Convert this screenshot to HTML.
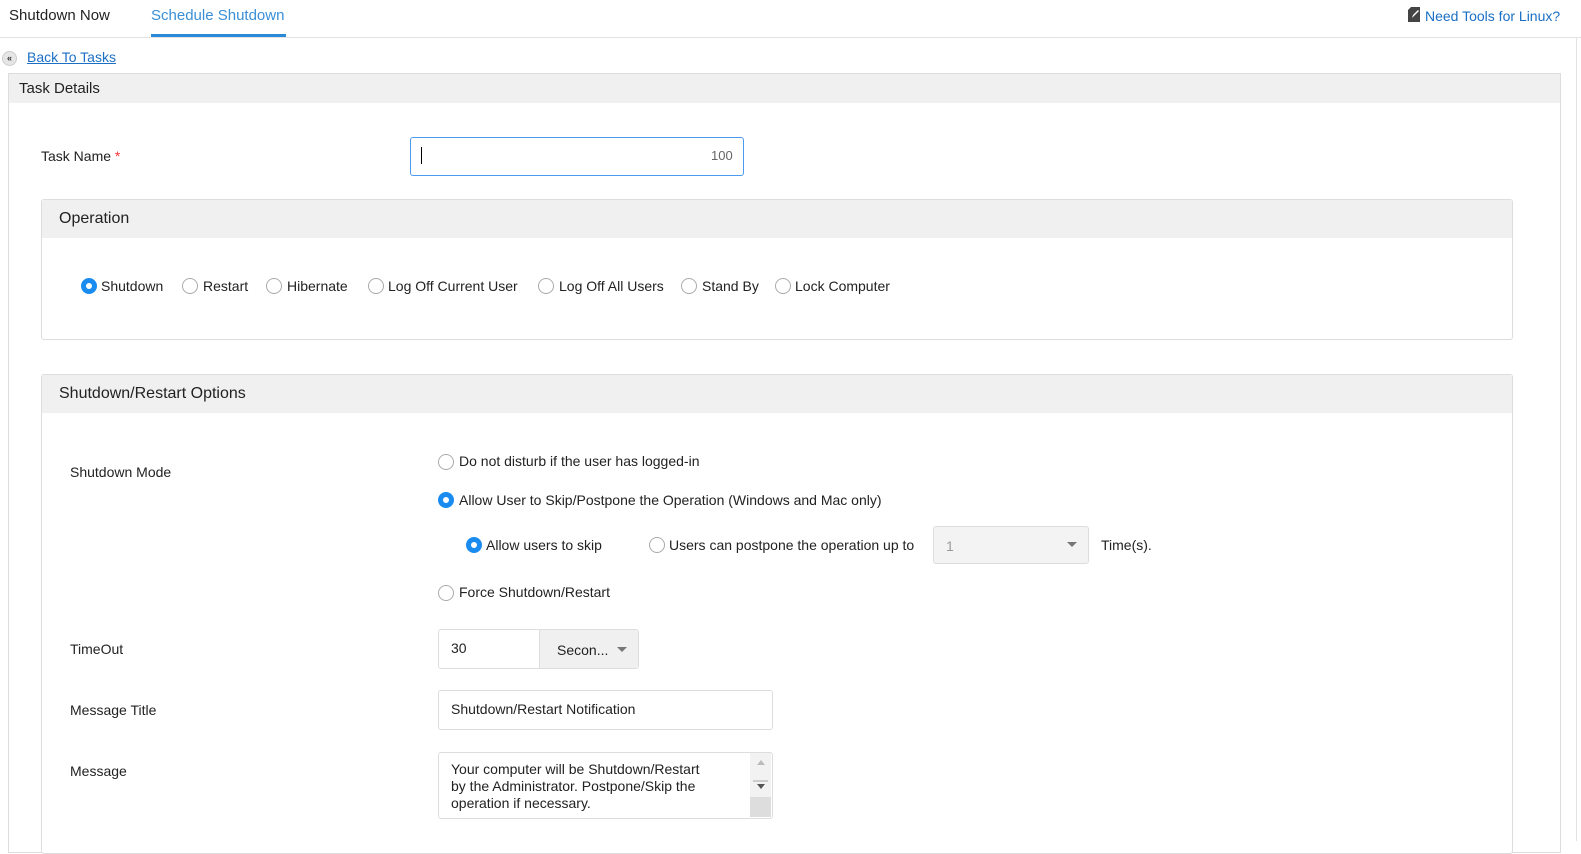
<!DOCTYPE html>
<html><head><meta charset="utf-8"><style>
*{box-sizing:border-box;margin:0;padding:0}
body{width:1581px;height:841px;overflow:hidden;background:#fff;font-family:"Liberation Sans",sans-serif;font-size:14px;color:#222;position:relative}
.a{position:absolute;white-space:nowrap}
.r{position:absolute;width:16px;height:16px;border:1px solid #aaa;border-radius:50%;background:#fff}
.r.on{border:none;background:#1a8cf0}
.r.on:after{content:"";position:absolute;left:5px;top:5px;width:6px;height:6px;border-radius:50%;background:#fff}
.lbl{position:absolute;white-space:nowrap;font-size:14px}
.box{position:absolute;border:1px solid #ddd;border-radius:3px;background:#fff}
.tri{position:absolute;width:0;height:0;border-left:5px solid transparent;border-right:5px solid transparent;border-top:5px solid #777}
</style></head><body>
<div class="a" style="left:0;top:37px;width:1581px;border-top:1px solid #e3e3e3"></div>
<div class="a" style="left:1576px;top:37px;height:804px;border-left:1px solid #e3e3e3"></div>
<div class="a" style="left:9px;top:7px;font-size:15px;color:#222">Shutdown Now</div>
<div class="a" style="left:151px;top:7px;font-size:15px;color:#3a8fd6">Schedule Shutdown</div>
<div class="a" style="left:151px;top:34px;width:135px;height:3px;background:#2a8ad8"></div>
<svg class="a" style="left:1408px;top:7px" width="13" height="15" viewBox="0 0 13 15"><path d="M0 3L3 0H12V15H0Z" fill="#444"/><path d="M4 11L5 8L10 3L11 4L6 9Z" fill="#fff"/></svg>
<div class="a" style="left:1425px;top:8px;font-size:14px;color:#1b6fc4">Need Tools for Linux?</div>
<div class="a" style="left:2px;top:51px;width:15px;height:15px;border-radius:50%;background:#e6e6e6;border:1px solid #ccc;font-size:9px;line-height:13px;text-align:center;font-weight:bold;color:#333">«</div>
<div class="a" style="left:27px;top:49px;color:#1b6fc4;text-decoration:underline;font-size:14px">Back To Tasks</div>

<div class="a" style="left:8px;top:73px;width:1553px;height:780px;border:1px solid #ddd"></div>
<div class="a" style="left:9px;top:74px;width:1551px;height:29px;background:#f0f0f0"></div>
<div class="a" style="left:19px;top:80px;font-size:15px;color:#222">Task Details</div>

<div class="a" style="left:41px;top:148px">Task Name <span style="color:#e33">*</span></div>
<div class="a" style="left:410px;top:137px;width:334px;height:39px;border:1px solid #4a9bef;border-radius:3px;background:#fff"></div>
<div class="a" style="left:421px;top:147px;width:1px;height:17px;background:#000"></div>
<div class="a" style="left:711px;top:148px;font-size:13px;color:#666">100</div>

<div class="box" style="left:41px;top:199px;width:1472px;height:141px"></div>
<div class="a" style="left:42px;top:200px;width:1470px;height:38px;background:#f0f0f0"></div>
<div class="a" style="left:59px;top:210px;font-size:16px">Operation</div>
<div class="r on" style="left:81px;top:278px"></div><div class="lbl" style="left:101px;top:278px">Shutdown</div>
<div class="r" style="left:182px;top:278px"></div><div class="lbl" style="left:203px;top:278px">Restart</div>
<div class="r" style="left:266px;top:278px"></div><div class="lbl" style="left:287px;top:278px">Hibernate</div>
<div class="r" style="left:368px;top:278px"></div><div class="lbl" style="left:388px;top:278px">Log Off Current User</div>
<div class="r" style="left:538px;top:278px"></div><div class="lbl" style="left:559px;top:278px">Log Off All Users</div>
<div class="r" style="left:681px;top:278px"></div><div class="lbl" style="left:702px;top:278px">Stand By</div>
<div class="r" style="left:775px;top:278px"></div><div class="lbl" style="left:795px;top:278px">Lock Computer</div>

<div class="box" style="left:41px;top:374px;width:1472px;height:480px"></div>
<div class="a" style="left:42px;top:375px;width:1470px;height:38px;background:#f0f0f0"></div>
<div class="a" style="left:59px;top:385px;font-size:16px">Shutdown/Restart Options</div>

<div class="a" style="left:70px;top:464px">Shutdown Mode</div>
<div class="r" style="left:438px;top:454px"></div><div class="lbl" style="left:459px;top:453px">Do not disturb if the user has logged-in</div>
<div class="r on" style="left:438px;top:492px"></div><div class="lbl" style="left:459px;top:492px">Allow User to Skip/Postpone the Operation (Windows and Mac only)</div>
<div class="r on" style="left:466px;top:537px"></div><div class="lbl" style="left:486px;top:537px">Allow users to skip</div>
<div class="r" style="left:649px;top:537px"></div><div class="lbl" style="left:669px;top:537px">Users can postpone the operation up to</div>
<div class="a" style="left:933px;top:526px;width:156px;height:38px;border:1px solid #ddd;border-radius:3px;background:#f3f3f3"></div>
<div class="a" style="left:946px;top:538px;color:#999">1</div>
<div class="tri" style="left:1067px;top:542px"></div>
<div class="a" style="left:1101px;top:537px">Time(s).</div>
<div class="r" style="left:438px;top:585px"></div><div class="lbl" style="left:459px;top:584px">Force Shutdown/Restart</div>

<div class="a" style="left:70px;top:641px">TimeOut</div>
<div class="a" style="left:438px;top:629px;width:201px;height:40px;border:1px solid #ddd;border-radius:3px;background:#fff"></div>
<div class="a" style="left:539px;top:630px;width:99px;height:38px;background:#f0f0f0;border-left:1px solid #ddd"></div>
<div class="a" style="left:451px;top:640px">30</div>
<div class="a" style="left:557px;top:642px">Secon...</div>
<div class="tri" style="left:617px;top:647px"></div>

<div class="a" style="left:70px;top:702px">Message Title</div>
<div class="box" style="left:438px;top:690px;width:335px;height:40px"></div>
<div class="a" style="left:451px;top:701px">Shutdown/Restart Notification</div>

<div class="a" style="left:70px;top:763px">Message</div>
<div class="box" style="left:438px;top:752px;width:335px;height:67px"></div>
<div class="a" style="left:451px;top:761px;line-height:17px;white-space:normal;width:290px">Your computer will be Shutdown/Restart<br>by the Administrator. Postpone/Skip the<br>operation if necessary.</div>
<div class="a" style="left:750px;top:753px;width:21px;height:64px;background:#f2f2f2"></div>
<div class="a" style="left:757px;top:760px;border-left:4px solid transparent;border-right:4px solid transparent;border-bottom:5px solid #bbb"></div>
<div class="a" style="left:753px;top:780px;width:15px;height:2px;background:#ccc"></div>
<div class="a" style="left:757px;top:784px;border-left:4px solid transparent;border-right:4px solid transparent;border-top:5px solid #555"></div>
<div class="a" style="left:750px;top:797px;width:21px;height:20px;background:#ddd"></div>
</body></html>
